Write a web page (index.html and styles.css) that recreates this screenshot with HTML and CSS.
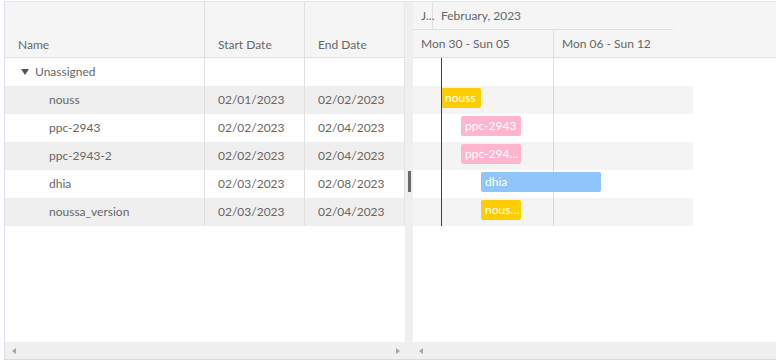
FILE: index.html
```html
<!doctype html>
<html>
<head>
    <meta name="viewport" content="width=device-width, initial-scale=1">
    <link rel="stylesheet" href="styles.css">
</head>
<body>

<div class='gantt'>
    <div class='grid'>
        <div class='grid_head'>
            <div class='cell name'>Name</div>
            <div class='cell date'>Start Date</div>
            <div class='cell date last'>End Date</div>
        </div>
        <div class='grid_body'>
            <div class='row'>
                <div class='cell name group'><span class='caret'></span>Unassigned</div>
                <div class='cell date'></div>
                <div class='cell date last'></div>
            </div>
            <div class='row alt'>
                <div class='cell name child'>nouss</div>
                <div class='cell date'>02/01/2023</div>
                <div class='cell date last'>02/02/2023</div>
            </div>
            <div class='row'>
                <div class='cell name child'>ppc-2943</div>
                <div class='cell date'>02/02/2023</div>
                <div class='cell date last'>02/04/2023</div>
            </div>
            <div class='row alt'>
                <div class='cell name child'>ppc-2943-2</div>
                <div class='cell date'>02/02/2023</div>
                <div class='cell date last'>02/04/2023</div>
            </div>
            <div class='row'>
                <div class='cell name child'>dhia</div>
                <div class='cell date'>02/03/2023</div>
                <div class='cell date last'>02/08/2023</div>
            </div>
            <div class='row alt'>
                <div class='cell name child'>noussa_version</div>
                <div class='cell date'>02/03/2023</div>
                <div class='cell date last'>02/04/2023</div>
            </div>
        </div>
        <div class='hscroll'>
            <span class='arrow left'></span>
            <span class='arrow right'></span>
        </div>
    </div>

    <div class='splitter'><span class='handle'></span></div>

    <div class='chart'>
        <div class='chart_head'>
            <div class='tier top'>
                <div class='scale s_jan'>J...</div>
                <div class='scale s_feb'>February, 2023</div>
            </div>
            <div class='tier'>
                <div class='scale s_week'>Mon 30 - Sun 05</div>
                <div class='scale s_week'>Mon 06 - Sun 12</div>
            </div>
        </div>
        <div class='chart_body'>
            <div class='lines'>
                <div class='trow'></div>
                <div class='trow alt'><div class='bar yellow' style='left: 28px; width: 40px'>nouss</div></div>
                <div class='trow'><div class='bar pink' style='left: 48px; width: 60px'>ppc-2943</div></div>
                <div class='trow alt'><div class='bar pink' style='left: 48px; width: 60px'>ppc-2943-2</div></div>
                <div class='trow'><div class='bar blue' style='left: 68px; width: 120px'>dhia</div></div>
                <div class='trow alt'><div class='bar yellow' style='left: 68px; width: 40px'>noussa_version</div></div>
                <div class='today'></div>
            </div>
        </div>
        <div class='hscroll'>
            <span class='arrow left'></span>
        </div>
    </div>
</div>

</body>
</html>
```

FILE: styles.css
```css
body {
    margin: 0;
    font-family: Lato, "Noto Sans", sans-serif;
    font-size: 12px;
    color: #666;
}

.gantt {
    display: flex;
    height: 357px;
    margin: 1px 0 0 4px;
    border-top: 1px solid #e6e6e6;
    border-bottom: 1px solid #d9d9e8;
    border-left: 1px solid #dcdcec;
}

.grid {
    width: 400px;
    display: flex;
    flex-direction: column;
}

.grid_head {
    display: flex;
    height: 55px;
    background-color: #f5f5f5;
    border-bottom: 1px solid #e0e0e0;
}

.grid_head .cell {
    align-items: flex-end;
    padding-bottom: 4px;
}

.grid_body {
    flex: 1;
    background-color: #fff;
}

.row {
    display: flex;
    height: 28px;
}

.row.alt {
    background-color: #efefef;
}

.cell {
    display: flex;
    align-items: center;
    box-sizing: border-box;
    padding-left: 13px;
    border-right: 1px solid #e0e0e0;
    white-space: nowrap;
    line-height: 16px;
}

.cell.name {
    width: 200px;
}

.cell.date {
    width: 100px;
}

.cell.last {
    width: 100px;
    border-right: 1px solid #e6e6e6;
}

.cell.group {
    padding-left: 16px;
}

.cell.child {
    padding-left: 44px;
}

.caret {
    width: 0;
    height: 0;
    margin-right: 6px;
    border-left: 4px solid transparent;
    border-right: 4px solid transparent;
    border-top: 6px solid #555;
}

.hscroll {
    display: flex;
    align-items: center;
    justify-content: space-between;
    height: 17px;
    padding: 0 5px 0 7px;
    background-color: #f0f0f0;
}

.arrow {
    width: 0;
    height: 0;
    border-top: 3px solid transparent;
    border-bottom: 3px solid transparent;
}

.arrow.left {
    border-right: 4px solid #a6a6a6;
}

.arrow.right {
    border-left: 4px solid #a6a6a6;
}

.splitter {
    width: 8px;
    background-color: #efefef;
}

.handle {
    display: block;
    width: 3px;
    height: 21px;
    margin: 169px 0 0 3px;
    background-color: #6a6a6a;
}

.chart {
    flex: 1;
    display: flex;
    flex-direction: column;
}

.chart .hscroll {
    padding-left: 6px;
}

.chart_head {
    background-color: #f5f5f5;
    border-bottom: 1px solid #e0e0e0;
}

.tier {
    display: flex;
    height: 27px;
}

.tier.top {
    height: 28px;
}

.scale {
    display: flex;
    align-items: center;
    box-sizing: border-box;
    padding-left: 8px;
    white-space: nowrap;
}

.top .scale {
    border-bottom: 1px solid #e0e0e0;
}

.s_jan {
    width: 20px;
    border-right: 1px solid #e0e0e0;
}

.s_feb {
    width: 240px;
}

.s_week {
    width: 141px;
    border-right: 1px solid #e0e0e0;
}

.s_week + .s_week {
    border-right: none;
}

.chart_body {
    flex: 1;
    background-color: #fff;
}

.lines {
    position: relative;
    width: 280px;
    background-image: linear-gradient(#e0e0e0, #e0e0e0);
    background-size: 1px 100%;
    background-position: 140px 0;
    background-repeat: no-repeat;
}

.trow {
    position: relative;
    height: 28px;
}

.trow.alt {
    background-color: rgba(0, 0, 0, 0.045);
}

.bar {
    position: absolute;
    top: 2px;
    height: 20px;
    box-sizing: border-box;
    padding: 0 1px 0 4px;
    border-radius: 2px;
    color: #fff;
    line-height: 20px;
    white-space: nowrap;
    overflow: hidden;
    text-overflow: ellipsis;
}

.yellow {
    background-color: #fecd00;
}

.pink {
    background-color: #ffb5cd;
}

.blue {
    background-color: #8fc5fb;
}

.today {
    position: absolute;
    left: 28px;
    top: 0;
    bottom: 0;
    width: 1px;
    background-color: #d40000;
}
```
